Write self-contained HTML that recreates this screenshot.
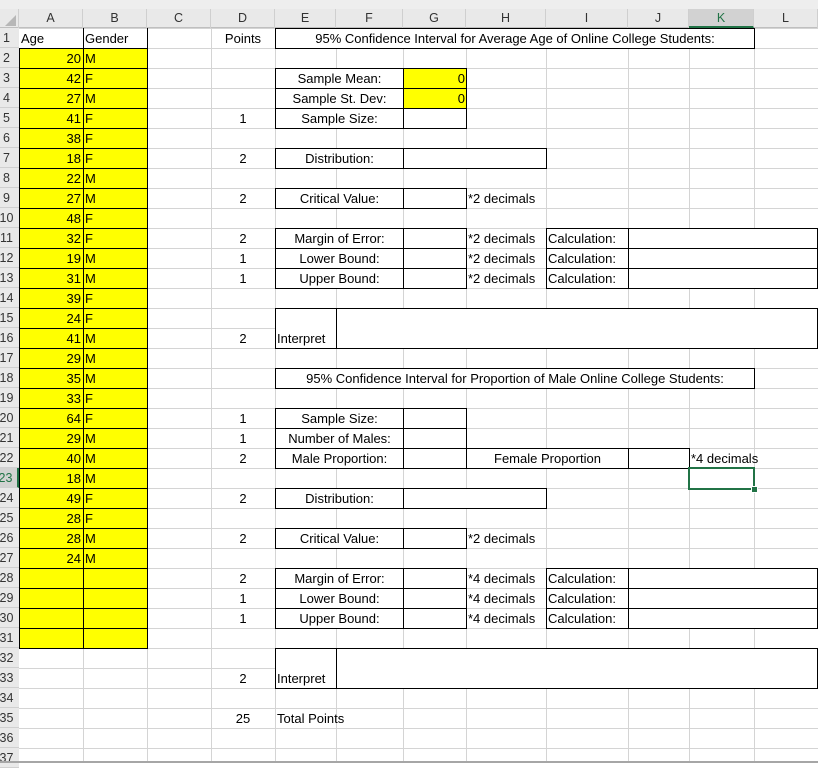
<!DOCTYPE html>
<html><head><meta charset="utf-8"><style>
*{margin:0;padding:0}
body{width:818px;height:763px;overflow:hidden;background:#fff;position:relative;font-family:"Liberation Sans",sans-serif;font-size:13px;color:#000}
.grid{position:absolute;left:19px;top:28px;width:799px;height:735px;
background-image:repeating-linear-gradient(to bottom,#d4d4d4 0 1px,transparent 1px 20px)}
.v{position:absolute;top:28px;height:735px;width:1px;background:#d4d4d4}
.b{position:absolute;border:1px solid #000;box-sizing:border-box;height:21px}
.t{position:absolute;height:20px;line-height:22px;white-space:nowrap;padding:0 2px;box-sizing:border-box}
.c{text-align:center}.r{text-align:right}
.rh{position:absolute;left:0;width:19px;height:20px;line-height:21px;font-size:12.5px;color:#333;background:#e9e9e9;border-bottom:1px solid #d0d0d0;box-sizing:border-box;text-align:center;text-indent:-6px;overflow:hidden}
.ch{position:absolute;top:9px;height:19px;line-height:19px;font-size:12.5px;color:#333;text-align:center;border-right:1px solid #cfcfcf;box-sizing:border-box}
.y{background:#ff0}
</style></head><body>
<div style="position:absolute;left:0;top:0;width:818px;height:9px;background:#eeeeee"></div>
<div style="position:absolute;left:0;top:9px;width:818px;height:19px;background:#e9e9e9;border-bottom:1px solid #bfbfbf;box-sizing:border-box"></div>
<div style="position:absolute;left:0;top:9px;width:19px;height:19px;border-right:1px solid #cfcfcf;box-sizing:border-box"></div>
<svg style="position:absolute;left:0;top:9px" width="19" height="19"><polygon points="5,17 16,17 16,6" fill="#b7b7b7"/></svg>
<div class="ch" style="left:19px;width:64px">A</div>
<div class="ch" style="left:83px;width:64px">B</div>
<div class="ch" style="left:147px;width:64px">C</div>
<div class="ch" style="left:211px;width:64px">D</div>
<div class="ch" style="left:275px;width:61px">E</div>
<div class="ch" style="left:336px;width:67px">F</div>
<div class="ch" style="left:403px;width:63px">G</div>
<div class="ch" style="left:466px;width:80px">H</div>
<div class="ch" style="left:546px;width:82px">I</div>
<div class="ch" style="left:628px;width:61px">J</div>
<div class="ch" style="left:689px;width:65px;background:#d2d2d2;color:#217346;border-bottom:2px solid #217346">K</div>
<div class="ch" style="left:754px;width:64px">L</div>

<div class="grid"></div>
<div class="v" style="left:83px"></div><div class="v" style="left:147px"></div><div class="v" style="left:211px"></div><div class="v" style="left:275px"></div><div class="v" style="left:336px"></div><div class="v" style="left:403px"></div><div class="v" style="left:466px"></div><div class="v" style="left:546px"></div><div class="v" style="left:628px"></div><div class="v" style="left:689px"></div><div class="v" style="left:754px"></div>

<div style="position:absolute;left:0;top:28px;width:19px;height:735px;background:#e9e9e9;border-right:1px solid #cfcfcf;box-sizing:border-box"></div>
<div class="rh" style="top:28px">1</div><div class="rh" style="top:48px">2</div><div class="rh" style="top:68px">3</div><div class="rh" style="top:88px">4</div><div class="rh" style="top:108px">5</div><div class="rh" style="top:128px">6</div><div class="rh" style="top:148px">7</div><div class="rh" style="top:168px">8</div><div class="rh" style="top:188px">9</div><div class="rh" style="top:208px">10</div><div class="rh" style="top:228px">11</div><div class="rh" style="top:248px">12</div><div class="rh" style="top:268px">13</div><div class="rh" style="top:288px">14</div><div class="rh" style="top:308px">15</div><div class="rh" style="top:328px">16</div><div class="rh" style="top:348px">17</div><div class="rh" style="top:368px">18</div><div class="rh" style="top:388px">19</div><div class="rh" style="top:408px">20</div><div class="rh" style="top:428px">21</div><div class="rh" style="top:448px">22</div><div class="rh" style="top:468px;background:#d2d2d2;color:#217346;border-right:2px solid #217346">23</div><div class="rh" style="top:488px">24</div><div class="rh" style="top:508px">25</div><div class="rh" style="top:528px">26</div><div class="rh" style="top:548px">27</div><div class="rh" style="top:568px">28</div><div class="rh" style="top:588px">29</div><div class="rh" style="top:608px">30</div><div class="rh" style="top:628px">31</div><div class="rh" style="top:648px">32</div><div class="rh" style="top:668px">33</div><div class="rh" style="top:688px">34</div><div class="rh" style="top:708px">35</div><div class="rh" style="top:728px">36</div><div class="rh" style="top:748px">37</div>

<div style="position:absolute;left:19px;top:48px;width:129px;height:600px;background:#ff0"></div>
<div style="position:absolute;left:19px;top:48px;width:129px;height:601px;background-image:repeating-linear-gradient(to bottom,#000 0 1px,transparent 1px 20px)"></div>
<div style="position:absolute;left:83px;top:28px;width:1px;height:621px;background:#000"></div>
<div style="position:absolute;left:147px;top:28px;width:1px;height:621px;background:#000"></div>
<div style="position:absolute;left:19px;top:48px;width:1px;height:601px;background:#000"></div>

<div class="t" style="left:19px;top:28px">Age</div>
<div class="t" style="left:83px;top:28px">Gender</div>
<div class="t r" style="left:19px;top:48px;width:64px">20</div><div class="t" style="left:83px;top:48px">M</div>
<div class="t r" style="left:19px;top:68px;width:64px">42</div><div class="t" style="left:83px;top:68px">F</div>
<div class="t r" style="left:19px;top:88px;width:64px">27</div><div class="t" style="left:83px;top:88px">M</div>
<div class="t r" style="left:19px;top:108px;width:64px">41</div><div class="t" style="left:83px;top:108px">F</div>
<div class="t r" style="left:19px;top:128px;width:64px">38</div><div class="t" style="left:83px;top:128px">F</div>
<div class="t r" style="left:19px;top:148px;width:64px">18</div><div class="t" style="left:83px;top:148px">F</div>
<div class="t r" style="left:19px;top:168px;width:64px">22</div><div class="t" style="left:83px;top:168px">M</div>
<div class="t r" style="left:19px;top:188px;width:64px">27</div><div class="t" style="left:83px;top:188px">M</div>
<div class="t r" style="left:19px;top:208px;width:64px">48</div><div class="t" style="left:83px;top:208px">F</div>
<div class="t r" style="left:19px;top:228px;width:64px">32</div><div class="t" style="left:83px;top:228px">F</div>
<div class="t r" style="left:19px;top:248px;width:64px">19</div><div class="t" style="left:83px;top:248px">M</div>
<div class="t r" style="left:19px;top:268px;width:64px">31</div><div class="t" style="left:83px;top:268px">M</div>
<div class="t r" style="left:19px;top:288px;width:64px">39</div><div class="t" style="left:83px;top:288px">F</div>
<div class="t r" style="left:19px;top:308px;width:64px">24</div><div class="t" style="left:83px;top:308px">F</div>
<div class="t r" style="left:19px;top:328px;width:64px">41</div><div class="t" style="left:83px;top:328px">M</div>
<div class="t r" style="left:19px;top:348px;width:64px">29</div><div class="t" style="left:83px;top:348px">M</div>
<div class="t r" style="left:19px;top:368px;width:64px">35</div><div class="t" style="left:83px;top:368px">M</div>
<div class="t r" style="left:19px;top:388px;width:64px">33</div><div class="t" style="left:83px;top:388px">F</div>
<div class="t r" style="left:19px;top:408px;width:64px">64</div><div class="t" style="left:83px;top:408px">F</div>
<div class="t r" style="left:19px;top:428px;width:64px">29</div><div class="t" style="left:83px;top:428px">M</div>
<div class="t r" style="left:19px;top:448px;width:64px">40</div><div class="t" style="left:83px;top:448px">M</div>
<div class="t r" style="left:19px;top:468px;width:64px">18</div><div class="t" style="left:83px;top:468px">M</div>
<div class="t r" style="left:19px;top:488px;width:64px">49</div><div class="t" style="left:83px;top:488px">F</div>
<div class="t r" style="left:19px;top:508px;width:64px">28</div><div class="t" style="left:83px;top:508px">F</div>
<div class="t r" style="left:19px;top:528px;width:64px">28</div><div class="t" style="left:83px;top:528px">M</div>
<div class="t r" style="left:19px;top:548px;width:64px">24</div><div class="t" style="left:83px;top:548px">M</div>

<div class="t c" style="left:211px;top:28px;width:64px">Points</div>
<div class="t c" style="left:211px;top:108px;width:64px">1</div>
<div class="t c" style="left:211px;top:148px;width:64px">2</div>
<div class="t c" style="left:211px;top:188px;width:64px">2</div>
<div class="t c" style="left:211px;top:228px;width:64px">2</div>
<div class="t c" style="left:211px;top:248px;width:64px">1</div>
<div class="t c" style="left:211px;top:268px;width:64px">1</div>
<div class="t c" style="left:211px;top:328px;width:64px">2</div>
<div class="t c" style="left:211px;top:408px;width:64px">1</div>
<div class="t c" style="left:211px;top:428px;width:64px">1</div>
<div class="t c" style="left:211px;top:448px;width:64px">2</div>
<div class="t c" style="left:211px;top:488px;width:64px">2</div>
<div class="t c" style="left:211px;top:528px;width:64px">2</div>
<div class="t c" style="left:211px;top:568px;width:64px">2</div>
<div class="t c" style="left:211px;top:588px;width:64px">1</div>
<div class="t c" style="left:211px;top:608px;width:64px">1</div>
<div class="t c" style="left:211px;top:668px;width:64px">2</div>
<div class="t c" style="left:211px;top:708px;width:64px">25</div>

<div class="b" style="left:275px;top:28px;width:480px;background:#fff"></div>
<div class="t c" style="left:275px;top:28px;width:480px">95% Confidence Interval for Average Age of Online College Students:</div>

<div class="b" style="left:275px;top:68px;width:129px;background:#fff"></div><div class="b y" style="left:403px;top:68px;width:64px"></div>
<div class="b" style="left:275px;top:88px;width:129px;background:#fff"></div><div class="b y" style="left:403px;top:88px;width:64px"></div>
<div class="b" style="left:275px;top:108px;width:129px;background:#fff"></div><div class="b" style="left:403px;top:108px;width:64px;background:#fff"></div>
<div class="t c" style="left:275px;top:68px;width:129px">Sample Mean:</div><div class="t r" style="left:403px;top:68px;width:64px">0</div>
<div class="t c" style="left:275px;top:88px;width:129px">Sample St. Dev:</div><div class="t r" style="left:403px;top:88px;width:64px">0</div>
<div class="t c" style="left:275px;top:108px;width:129px">Sample Size:</div>

<div class="b" style="left:275px;top:148px;width:129px;background:#fff"></div><div class="b" style="left:403px;top:148px;width:144px;background:#fff"></div>
<div class="t c" style="left:275px;top:148px;width:129px">Distribution:</div>

<div class="b" style="left:275px;top:188px;width:129px;background:#fff"></div><div class="b" style="left:403px;top:188px;width:64px;background:#fff"></div>
<div class="t c" style="left:275px;top:188px;width:129px">Critical Value:</div>
<div class="t" style="left:466px;top:188px">*2 decimals</div>

<div class="b" style="left:275px;top:228px;width:129px;background:#fff"></div><div class="b" style="left:403px;top:228px;width:64px;background:#fff"></div><div class="b" style="left:546px;top:228px;width:83px;background:#fff"></div><div class="b" style="left:628px;top:228px;width:190px;background:#fff"></div>
<div class="b" style="left:275px;top:248px;width:129px;background:#fff"></div><div class="b" style="left:403px;top:248px;width:64px;background:#fff"></div><div class="b" style="left:546px;top:248px;width:83px;background:#fff"></div><div class="b" style="left:628px;top:248px;width:190px;background:#fff"></div>
<div class="b" style="left:275px;top:268px;width:129px;background:#fff"></div><div class="b" style="left:403px;top:268px;width:64px;background:#fff"></div><div class="b" style="left:546px;top:268px;width:83px;background:#fff"></div><div class="b" style="left:628px;top:268px;width:190px;background:#fff"></div>
<div class="t c" style="left:275px;top:228px;width:129px">Margin of Error:</div><div class="t" style="left:466px;top:228px">*2 decimals</div><div class="t" style="left:546px;top:228px">Calculation:</div>
<div class="t c" style="left:275px;top:248px;width:129px">Lower Bound:</div><div class="t" style="left:466px;top:248px">*2 decimals</div><div class="t" style="left:546px;top:248px">Calculation:</div>
<div class="t c" style="left:275px;top:268px;width:129px">Upper Bound:</div><div class="t" style="left:466px;top:268px">*2 decimals</div><div class="t" style="left:546px;top:268px">Calculation:</div>

<div class="b" style="left:275px;top:308px;width:62px;height:41px;background:#fff"></div><div class="b" style="left:336px;top:308px;width:482px;height:41px;background:#fff"></div>
<div class="t" style="left:275px;top:328px">Interpret</div>

<div class="b" style="left:275px;top:368px;width:480px;background:#fff"></div>
<div class="t c" style="left:275px;top:368px;width:480px">95% Confidence Interval for Proportion of Male Online College Students:</div>

<div class="b" style="left:275px;top:408px;width:129px;background:#fff"></div><div class="b" style="left:403px;top:408px;width:64px;background:#fff"></div>
<div class="b" style="left:275px;top:428px;width:129px;background:#fff"></div><div class="b" style="left:403px;top:428px;width:64px;background:#fff"></div>
<div class="b" style="left:275px;top:448px;width:129px;background:#fff"></div><div class="b" style="left:403px;top:448px;width:64px;background:#fff"></div>
<div class="b" style="left:466px;top:448px;width:163px;background:#fff"></div><div class="b" style="left:628px;top:448px;width:62px;background:#fff"></div>
<div class="t c" style="left:275px;top:408px;width:129px">Sample Size:</div>
<div class="t c" style="left:275px;top:428px;width:129px">Number of Males:</div>
<div class="t c" style="left:275px;top:448px;width:129px">Male Proportion:</div>
<div class="t c" style="left:466px;top:448px;width:163px">Female Proportion</div>
<div class="t" style="left:689px;top:448px">*4 decimals</div>
<div style="position:absolute;left:688px;top:467px;width:67px;height:23px;border:2px solid #217346;box-sizing:border-box"></div>
<div style="position:absolute;left:751px;top:486px;width:5px;height:5px;background:#217346;border:1px solid #fff"></div>

<div class="b" style="left:275px;top:488px;width:129px;background:#fff"></div><div class="b" style="left:403px;top:488px;width:144px;background:#fff"></div>
<div class="t c" style="left:275px;top:488px;width:129px">Distribution:</div>

<div class="b" style="left:275px;top:528px;width:129px;background:#fff"></div><div class="b" style="left:403px;top:528px;width:64px;background:#fff"></div>
<div class="t c" style="left:275px;top:528px;width:129px">Critical Value:</div>
<div class="t" style="left:466px;top:528px">*2 decimals</div>

<div class="b" style="left:275px;top:568px;width:129px;background:#fff"></div><div class="b" style="left:403px;top:568px;width:64px;background:#fff"></div><div class="b" style="left:546px;top:568px;width:83px;background:#fff"></div><div class="b" style="left:628px;top:568px;width:190px;background:#fff"></div>
<div class="b" style="left:275px;top:588px;width:129px;background:#fff"></div><div class="b" style="left:403px;top:588px;width:64px;background:#fff"></div><div class="b" style="left:546px;top:588px;width:83px;background:#fff"></div><div class="b" style="left:628px;top:588px;width:190px;background:#fff"></div>
<div class="b" style="left:275px;top:608px;width:129px;background:#fff"></div><div class="b" style="left:403px;top:608px;width:64px;background:#fff"></div><div class="b" style="left:546px;top:608px;width:83px;background:#fff"></div><div class="b" style="left:628px;top:608px;width:190px;background:#fff"></div>
<div class="t c" style="left:275px;top:568px;width:129px">Margin of Error:</div><div class="t" style="left:466px;top:568px">*4 decimals</div><div class="t" style="left:546px;top:568px">Calculation:</div>
<div class="t c" style="left:275px;top:588px;width:129px">Lower Bound:</div><div class="t" style="left:466px;top:588px">*4 decimals</div><div class="t" style="left:546px;top:588px">Calculation:</div>
<div class="t c" style="left:275px;top:608px;width:129px">Upper Bound:</div><div class="t" style="left:466px;top:608px">*4 decimals</div><div class="t" style="left:546px;top:608px">Calculation:</div>

<div class="b" style="left:275px;top:648px;width:62px;height:41px;background:#fff"></div><div class="b" style="left:336px;top:648px;width:482px;height:41px;background:#fff"></div>
<div class="t" style="left:275px;top:668px">Interpret</div>

<div class="t" style="left:275px;top:708px">Total Points</div>

<div style="position:absolute;left:0;top:761px;width:818px;height:2px;background:#a6a6a6"></div>
</body></html>
